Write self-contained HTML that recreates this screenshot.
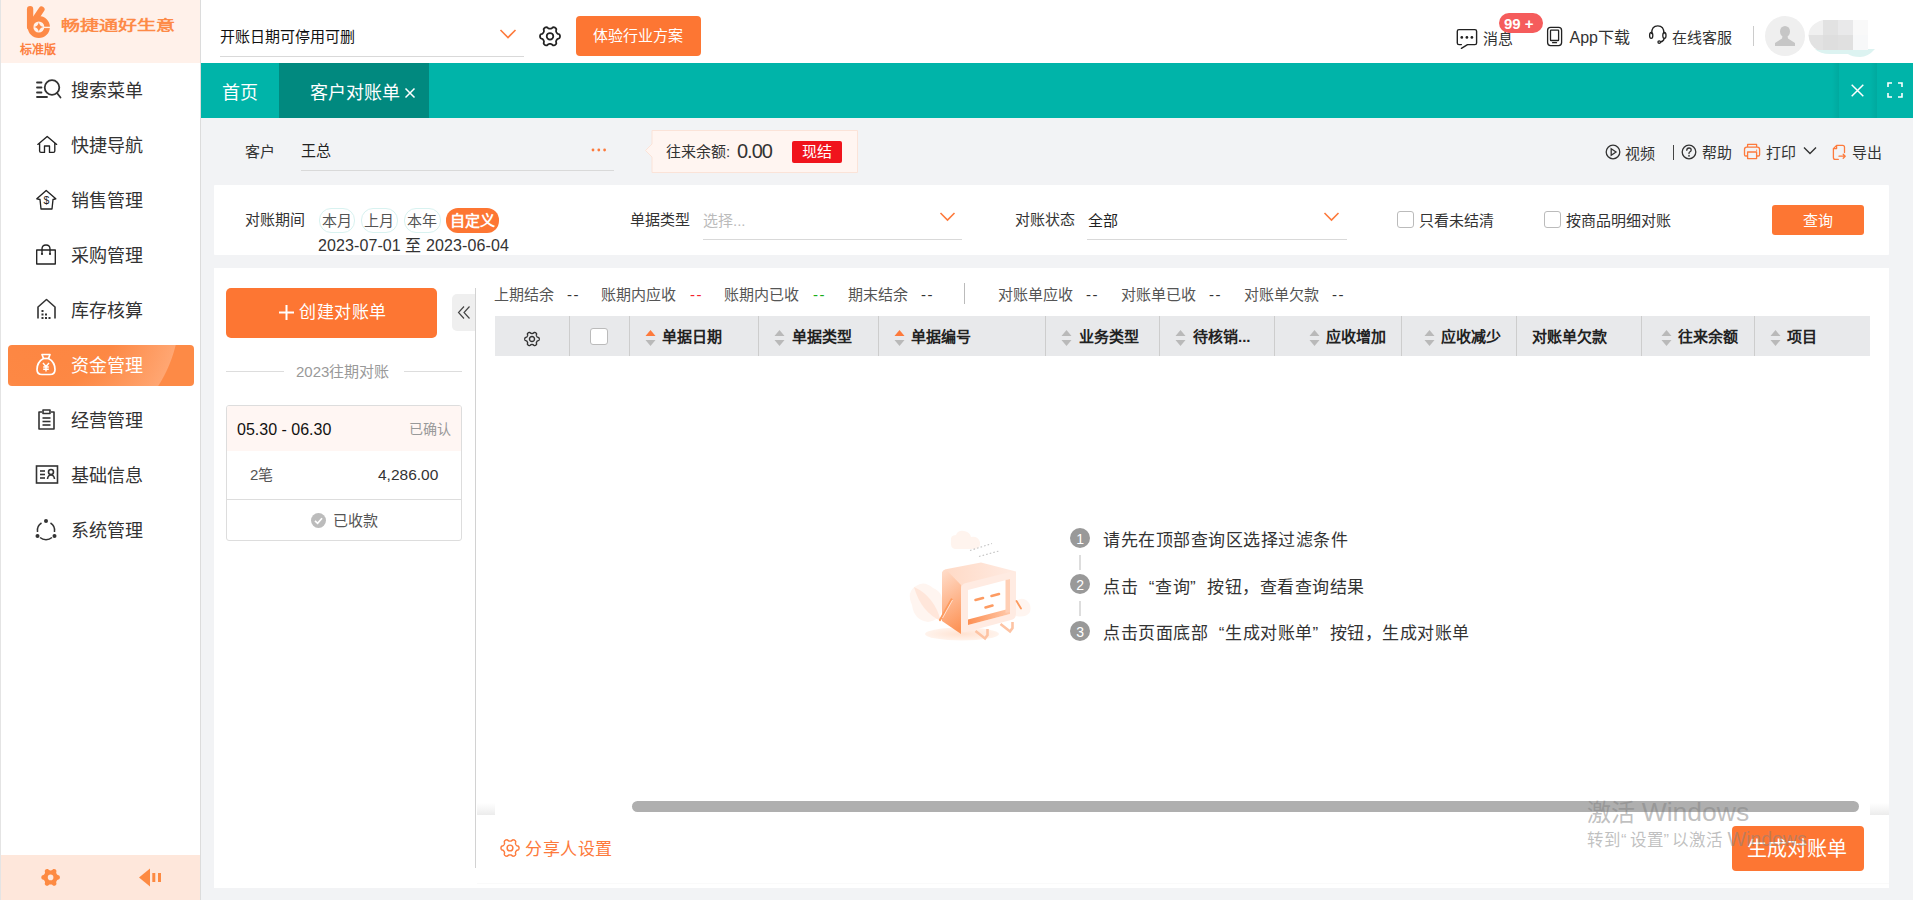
<!DOCTYPE html>
<html lang="zh-CN"><head><meta charset="utf-8">
<style>
*{box-sizing:border-box;margin:0;padding:0}
html,body{width:1913px;height:900px;overflow:hidden;background:#f2f3f5;font-family:"Liberation Sans",sans-serif;color:#333}
.a{position:absolute;white-space:nowrap}
svg{display:block}
</style></head><body>
<!-- SIDEBAR -->
<div class="a" style="left:0;top:0;width:201px;height:900px;background:#fff;border-left:1px solid #e4e4e4;border-right:1px solid #dcdcdc"></div>
<div class="a" style="left:1px;top:0;width:199px;height:63px;background:#fff1ea"></div>
<div class="a" style="left:1px;top:855px;width:199px;height:45px;background:#fee7db"></div>


<!-- logo -->
<svg class="a" style="left:15px;top:0px" width="50" height="42" viewBox="15 0 50 42">
<g fill="none" stroke="#fd8a47" stroke-linecap="round">
<line x1="30.1" y1="9.2" x2="30.1" y2="27" stroke-width="6.3"/>
<line x1="41.6" y1="9.4" x2="35.5" y2="18.5" stroke-width="6"/>
<circle cx="38.8" cy="27" r="8.3" stroke-width="5.6"/>
</g>
<line x1="44" y1="27.4" x2="50" y2="27.4" stroke="#fff1ea" stroke-width="1.4"/>
<path d="M38.8 22.2 Q39.5 26.3 43.6 27 Q39.5 27.7 38.8 31.8 Q38.1 27.7 34 27 Q38.1 26.3 38.8 22.2Z" fill="#fd8a47"/>
</svg>
<div class="a" style="left:61px;top:18.5px;font-size:16px;line-height:16px;font-weight:bold;color:#fd8a47;transform:scale(1.19,0.82);transform-origin:0 0">畅捷通好生意</div>
<div class="a" style="left:20px;top:44px;font-size:12px;line-height:13px;font-weight:bold;color:#fd8040">标准版</div>

<!-- active bg -->
<div class="a" style="left:8px;top:345px;width:186px;height:41px;border-radius:4px;background:radial-gradient(circle 136px at 36px -32px,#fd8541 0%,#fd8844 55%,#ffa672 99.3%,#fd8a46 100%)"></div>

<!-- menu text -->
<div class="a" style="left:71px;top:82px;font-size:18px;line-height:18px;color:#333">搜索菜单</div>
<div class="a" style="left:71px;top:137px;font-size:18px;line-height:18px;color:#333">快捷导航</div>
<div class="a" style="left:71px;top:192px;font-size:18px;line-height:18px;color:#333">销售管理</div>
<div class="a" style="left:71px;top:247px;font-size:18px;line-height:18px;color:#333">采购管理</div>
<div class="a" style="left:71px;top:302px;font-size:18px;line-height:18px;color:#333">库存核算</div>
<div class="a" style="left:71px;top:357px;font-size:18px;line-height:18px;color:#fff">资金管理</div>
<div class="a" style="left:71px;top:412px;font-size:18px;line-height:18px;color:#333">经营管理</div>
<div class="a" style="left:71px;top:467px;font-size:18px;line-height:18px;color:#333">基础信息</div>
<div class="a" style="left:71px;top:522px;font-size:18px;line-height:18px;color:#333">系统管理</div>

<!-- menu icons -->
<svg class="a" style="left:34px;top:78px" width="30" height="24" viewBox="0 0 30 24" fill="none" stroke="#333" stroke-width="1.8" stroke-linecap="round">
<line x1="3" y1="4.5" x2="7.5" y2="4.5"/><line x1="3" y1="9.5" x2="7.5" y2="9.5"/><line x1="3" y1="14.5" x2="7.5" y2="14.5"/><line x1="3" y1="19" x2="13" y2="19"/>
<circle cx="18" cy="9.5" r="7.3"/><line x1="23" y1="15" x2="26.5" y2="19.5"/>
</svg>
<svg class="a" style="left:35px;top:134px" width="24" height="22" viewBox="0 0 24 22" fill="none" stroke="#222" stroke-width="1.35" stroke-linejoin="round" stroke-linecap="round">
<path d="M2.8 10.4 L12.2 2.4 L21.7 10.4 M4.6 9.2 V17 Q4.6 18.4 6 18.4 H9.5 V12 H14.5 V18.4 H18.4 Q19.8 18.4 19.8 17 V9.2"/>
</svg>
<svg class="a" style="left:35px;top:188px" width="24" height="24" viewBox="0 0 24 24" fill="none" stroke="#222" stroke-width="1.35" stroke-linejoin="round">
<path d="M11.2 2.5 L20.8 10.8 L18 11.5 L17 21 H6 L5 11.5 L1.8 10.8 Z"/>
<text x="11.4" y="15.8" font-size="10.5" font-family="Liberation Sans" text-anchor="middle" fill="#222" stroke="none">$</text>
</svg>
<svg class="a" style="left:35px;top:242px" width="24" height="24" viewBox="0 0 24 24" fill="none" stroke="#222" stroke-width="1.35" stroke-linejoin="round">
<rect x="1.7" y="8" width="18.6" height="14"/><path d="M7 12 V7 Q7 3 11 3 Q15 3 15 7 V12"/>
<circle cx="7" cy="12" r="1.1" fill="#222" stroke="none"/><circle cx="15" cy="12" r="1.1" fill="#222" stroke="none"/>
</svg>
<svg class="a" style="left:35px;top:297px" width="24" height="24" viewBox="0 0 24 24" fill="none" stroke="#333" stroke-width="1.6" stroke-linejoin="round">
<path d="M3 21.5 V10 L11.5 2.5 L20 10 V21.5"/>
<g fill="#333" stroke="none"><rect x="6.5" y="13" width="2" height="2"/><rect x="6.5" y="16.5" width="2" height="2"/><rect x="6.5" y="20" width="2" height="2"/><rect x="10" y="16.5" width="2" height="2"/><rect x="10" y="20" width="2" height="2"/><rect x="13.5" y="20" width="2" height="2"/></g>
</svg>
<svg class="a" style="left:34px;top:352px" width="24" height="25" viewBox="0 0 24 25" fill="none" stroke="#fff" stroke-width="1.7" stroke-linejoin="round">
<path d="M8 2.5 H16 L14.5 6.5 Q21 10 21 17.5 Q21 22.5 16 22.5 H8 Q3 22.5 3 17.5 Q3 10 9.5 6.5 Z"/><line x1="9.5" y1="6.5" x2="14.5" y2="6.5"/>
<path d="M9 11 L12 14.5 L15 11 M12 14.5 V19.5 M9.2 15 H14.8 M9.2 17.3 H14.8" stroke-width="1.4"/>
</svg>
<svg class="a" style="left:36px;top:408px" width="22" height="24" viewBox="0 0 22 24" fill="none" stroke="#333" stroke-width="1.6" stroke-linejoin="round">
<path d="M6 4 H3 V21 H18 V4 H15 M7 2 H14 V5.5 H7 Z"/><line x1="6.5" y1="10" x2="14.5" y2="10"/><line x1="6.5" y1="13.5" x2="14.5" y2="13.5"/><line x1="6.5" y1="17" x2="14.5" y2="17"/>
</svg>
<svg class="a" style="left:34px;top:463px" width="26" height="24" viewBox="0 0 26 24" fill="none" stroke="#333" stroke-width="1.6">
<rect x="2.5" y="3" width="21" height="17"/><line x1="6" y1="8" x2="11" y2="8"/><line x1="6" y1="11.5" x2="11" y2="11.5"/><line x1="6" y1="15" x2="11" y2="15"/>
<circle cx="17" cy="9" r="2.5"/><path d="M13.5 16 Q14 12 17 12 Q20 12 20.5 16"/>
</svg>
<svg class="a" style="left:34px;top:518px" width="24" height="24" viewBox="0 0 24 24" fill="none" stroke="#333" stroke-width="1.5">
<path d="M7.5 5 A9 9 0 0 0 3.5 14"/><path d="M16.5 5 A9 9 0 0 1 20.5 14"/><path d="M6 19.5 A9 9 0 0 0 18 19.5"/>
<g fill="#333" stroke="none"><circle cx="12" cy="3" r="2"/><circle cx="3.5" cy="18" r="2"/><circle cx="20.5" cy="18" r="2"/></g>
</svg>

<!-- bottom icons -->
<svg class="a" style="left:40px;top:867px" width="22" height="22" viewBox="40 867 22 22"><path fill="#fd8a42" fill-rule="evenodd" d="M59.90 877.40 L59.86 876.91 L59.73 876.44 L59.52 875.99 L59.20 875.57 L58.47 875.29 L57.74 875.08 L57.39 874.80 L57.10 874.51 L56.86 874.21 L56.66 873.90 L56.49 873.57 L56.36 873.22 L56.25 872.83 L56.18 872.37 L56.36 871.64 L56.48 870.87 L56.28 870.38 L56.00 869.97 L55.65 869.62 L55.25 869.35 L54.81 869.14 L54.34 869.01 L53.84 868.97 L53.32 869.04 L52.71 869.53 L52.16 870.05 L51.74 870.22 L51.34 870.32 L50.97 870.38 L50.60 870.40 L50.23 870.38 L49.86 870.32 L49.46 870.22 L49.04 870.05 L48.49 869.53 L47.88 869.04 L47.36 868.97 L46.86 869.01 L46.39 869.14 L45.95 869.35 L45.55 869.62 L45.20 869.97 L44.92 870.38 L44.72 870.87 L44.84 871.64 L45.02 872.37 L44.95 872.83 L44.84 873.22 L44.71 873.57 L44.54 873.90 L44.34 874.21 L44.10 874.51 L43.81 874.80 L43.46 875.08 L42.73 875.29 L42.00 875.57 L41.68 875.99 L41.47 876.44 L41.34 876.91 L41.30 877.40 L41.34 877.89 L41.47 878.36 L41.68 878.81 L42.00 879.23 L42.73 879.51 L43.46 879.72 L43.81 880.00 L44.10 880.29 L44.34 880.59 L44.54 880.90 L44.71 881.23 L44.84 881.58 L44.95 881.97 L45.02 882.43 L44.84 883.16 L44.72 883.93 L44.92 884.42 L45.20 884.83 L45.55 885.18 L45.95 885.45 L46.39 885.66 L46.86 885.79 L47.36 885.83 L47.88 885.76 L48.49 885.27 L49.04 884.75 L49.46 884.58 L49.86 884.48 L50.23 884.42 L50.60 884.40 L50.97 884.42 L51.34 884.48 L51.74 884.58 L52.16 884.75 L52.71 885.27 L53.32 885.76 L53.84 885.83 L54.34 885.79 L54.81 885.66 L55.25 885.45 L55.65 885.18 L56.00 884.83 L56.28 884.42 L56.48 883.93 L56.36 883.16 L56.18 882.43 L56.25 881.97 L56.36 881.58 L56.49 881.23 L56.66 880.90 L56.86 880.59 L57.10 880.29 L57.39 880.00 L57.74 879.72 L58.47 879.51 L59.20 879.23 L59.52 878.81 L59.73 878.36 L59.86 877.89Z M50.6 874.6 A2.8 2.8 0 1 0 50.6 880.2 A2.8 2.8 0 1 0 50.6 874.6Z"/></svg>
<svg class="a" style="left:138px;top:868px" width="24" height="19" viewBox="0 0 24 19">
<path fill="#fd8a42" d="M1 9.5 L12 0.5 V18.5 Z"/><rect x="14.3" y="5" width="3" height="9" fill="#fd8a42"/><rect x="20" y="5" width="3" height="9" fill="#fd8a42"/>
</svg>

<!-- HEADER -->
<div class="a" style="left:201px;top:0;width:1712px;height:63px;background:#fff"></div>

<!-- TAB BAR -->
<div class="a" style="left:201px;top:63px;width:1712px;height:55px;background:#00b4a9"></div>
<div class="a" style="left:279px;top:63px;width:150px;height:55px;background:#01897f"></div>


<div class="a" style="left:220px;top:29px;font-size:15px;line-height:15px;color:#111">开账日期可停用可删</div>
<div class="a" style="left:220px;top:56px;width:304px;height:1px;background:#d9d9d9"></div>
<svg class="a" style="left:499px;top:28px" width="18" height="12" viewBox="0 0 18 12" fill="none" stroke="#fd7a3c" stroke-width="1.6"><path d="M1.5 2 L9 9.5 L16.5 2"/></svg>
<svg class="a" style="left:538px;top:25px" width="24" height="23" viewBox="-12 -11.3 24 23"><path d="M10.00 -0.00 L9.96 -0.52 L9.84 -1.03 L9.62 -1.52 L9.30 -1.98 L8.50 -2.28 L7.70 -2.50 L7.33 -2.82 L7.04 -3.14 L6.80 -3.46 L6.58 -3.80 L6.40 -4.15 L6.24 -4.53 L6.10 -4.94 L6.01 -5.41 L6.22 -6.22 L6.36 -7.07 L6.13 -7.57 L5.81 -8.00 L5.43 -8.36 L5.00 -8.66 L4.53 -8.89 L4.02 -9.04 L3.49 -9.10 L2.94 -9.04 L2.28 -8.50 L1.68 -7.92 L1.23 -7.76 L0.81 -7.67 L0.40 -7.62 L0.00 -7.60 L-0.40 -7.62 L-0.81 -7.67 L-1.23 -7.76 L-1.68 -7.92 L-2.28 -8.50 L-2.94 -9.04 L-3.49 -9.10 L-4.02 -9.04 L-4.53 -8.89 L-5.00 -8.66 L-5.43 -8.36 L-5.81 -8.00 L-6.13 -7.57 L-6.36 -7.07 L-6.22 -6.22 L-6.01 -5.41 L-6.10 -4.94 L-6.24 -4.53 L-6.40 -4.15 L-6.58 -3.80 L-6.80 -3.46 L-7.04 -3.14 L-7.33 -2.82 L-7.70 -2.50 L-8.50 -2.28 L-9.30 -1.98 L-9.62 -1.52 L-9.84 -1.03 L-9.96 -0.52 L-10.00 -0.00 L-9.96 0.52 L-9.84 1.03 L-9.62 1.52 L-9.30 1.98 L-8.50 2.28 L-7.70 2.50 L-7.33 2.82 L-7.04 3.14 L-6.80 3.46 L-6.58 3.80 L-6.40 4.15 L-6.24 4.53 L-6.10 4.94 L-6.01 5.41 L-6.22 6.22 L-6.36 7.07 L-6.13 7.57 L-5.81 8.00 L-5.43 8.36 L-5.00 8.66 L-4.53 8.89 L-4.02 9.04 L-3.49 9.10 L-2.94 9.04 L-2.28 8.50 L-1.68 7.92 L-1.23 7.76 L-0.81 7.67 L-0.40 7.62 L-0.00 7.60 L0.40 7.62 L0.81 7.67 L1.23 7.76 L1.68 7.92 L2.28 8.50 L2.94 9.04 L3.49 9.10 L4.02 9.04 L4.53 8.89 L5.00 8.66 L5.43 8.36 L5.81 8.00 L6.13 7.57 L6.36 7.07 L6.22 6.22 L6.01 5.41 L6.10 4.94 L6.24 4.53 L6.40 4.15 L6.58 3.80 L6.80 3.46 L7.04 3.14 L7.33 2.82 L7.70 2.50 L8.50 2.28 L9.30 1.98 L9.62 1.52 L9.84 1.03 L9.96 0.52Z" fill="none" stroke="#222" stroke-width="1.75" stroke-linejoin="round"/><circle cx="0" cy="0" r="3.3" fill="none" stroke="#222" stroke-width="1.75"/></svg>
<div class="a" style="left:576px;top:16px;width:125px;height:40px;background:#fd7633;border-radius:4px"></div>
<div class="a" style="left:593px;top:28px;font-size:15px;line-height:15px;color:#fff">体验行业方案</div>

<!-- right header -->
<svg class="a" style="left:1454px;top:27px" width="26" height="24" viewBox="1454 27 26 24" fill="none" stroke="#222" stroke-width="1.4" stroke-linejoin="round" stroke-linecap="round">
<path d="M1461.4 44.6 H1459 Q1457.3 44.6 1457.3 42.9 V31.3 Q1457.3 29.6 1459 29.6 H1474.9 Q1476.6 29.6 1476.6 31.3 V42.9 Q1476.6 44.6 1474.9 44.6 H1467.5 L1461.4 48.3"/>
<g fill="#222" stroke="none"><circle cx="1461.8" cy="37.4" r="1.35"/><circle cx="1466.9" cy="37.4" r="1.35"/><circle cx="1471.9" cy="37.4" r="1.35"/></g>
</svg>
<div class="a" style="left:1483px;top:31px;font-size:15px;line-height:15px;color:#333">消息</div>
<div class="a" style="left:1499px;top:13px;width:44px;height:20px;border-radius:10px;background:#f55c5c"></div>
<div class="a" style="left:1504px;top:15px;font-size:15px;line-height:17px;font-weight:bold;color:#fff">99 +</div>
<svg class="a" style="left:1545px;top:25px" width="19" height="23" viewBox="1545 25 19 23" fill="none" stroke="#222" stroke-width="1.3" stroke-linejoin="round" stroke-linecap="round">
<rect x="1547.6" y="27.4" width="14" height="18.2" rx="3"/><rect x="1550.5" y="30.2" width="8.1" height="10.3" rx="0.6"/><line x1="1552.6" y1="42.7" x2="1556.5" y2="42.7"/>
</svg>
<div class="a" style="left:1569.5px;top:30px;font-size:16px;line-height:16px;color:#333">App下载</div>
<svg class="a" style="left:1647px;top:23px" width="22" height="23" viewBox="1647 23 22 23" fill="none" stroke="#222" stroke-width="1.3" stroke-linejoin="round" stroke-linecap="round">
<path d="M1651.6 33.5 Q1651.6 25.9 1657.8 25.9 Q1664 25.9 1664 33.5"/>
<ellipse cx="1651.2" cy="35.4" rx="1.6" ry="2.9"/><ellipse cx="1664.4" cy="35.4" rx="1.6" ry="2.9"/>
<path d="M1664.2 38.4 Q1663.6 41.6 1660.6 42"/><circle cx="1659.2" cy="42.1" r="1.25"/>
</svg>
<div class="a" style="left:1672px;top:30px;font-size:15px;line-height:15px;color:#333">在线客服</div>
<div class="a" style="left:1753px;top:26px;width:1px;height:20px;background:#ccc"></div>
<div class="a" style="left:1765px;top:16px;width:40px;height:40px;border-radius:50%;background:#efefef"></div>
<svg class="a" style="left:1773px;top:24px" width="24" height="24" viewBox="0 0 24 24"><ellipse cx="12" cy="7.5" rx="5" ry="5.5" fill="#c6c6c6"/><path d="M9.5 12 H14.5 L15 14.5 L22 19 V22 H2 V19 L9 14.5 Z" fill="#c6c6c6"/></svg>
<svg class="a" style="left:1805px;top:17px" width="72" height="42" viewBox="1805 17 72 42">
<path d="M1815 49 H1875 Q1868 57 1860 57 Q1852 57 1848 54 H1830 Q1820 54 1815 49Z" fill="#dcf3f1"/>
<g>
<path d="M1823 20 V35 H1808.5 Q1809 24 1823 20Z" fill="#f0f0f0"/>
<rect x="1823" y="20" width="15" height="15" fill="#e2e2e2"/>
<rect x="1838" y="20" width="15" height="15" fill="#e9e9ea"/>
<rect x="1853" y="20" width="15" height="15" fill="#f9f9f9"/>
<path d="M1808.5 35 H1823 V50 H1818 Q1809 46 1808.5 35Z" fill="#e2e2e2"/>
<rect x="1823" y="35" width="15" height="15" fill="#dedede"/>
<rect x="1838" y="35" width="15" height="15" fill="#e0e0e0"/>
<rect x="1853" y="35" width="15" height="15" fill="#f7f8f9"/>
</g>
</svg>

<!-- tab bar content -->
<div class="a" style="left:222px;top:83.5px;font-size:18px;line-height:18px;color:#fff">首页</div>
<div class="a" style="left:310px;top:83.5px;font-size:18px;line-height:18px;color:#fff">客户对账单</div>
<svg class="a" style="left:404px;top:87px" width="12" height="12" viewBox="0 0 12 12" stroke="#fff" stroke-width="1.5"><path d="M1.5 1.5 L10.5 10.5 M10.5 1.5 L1.5 10.5"/></svg>
<div class="a" style="left:1832px;top:63px;width:7px;height:55px;background:linear-gradient(90deg,rgba(0,60,55,0),rgba(0,60,55,0.09))"></div>
<div class="a" style="left:1870px;top:63px;width:7px;height:55px;background:linear-gradient(90deg,rgba(0,60,55,0),rgba(0,60,55,0.09))"></div>
<svg class="a" style="left:1851px;top:84px" width="13" height="13" viewBox="0 0 13 13" stroke="#fff" stroke-width="1.5"><path d="M0.7 0.7 L12.3 12.3 M12.3 0.7 L0.7 12.3"/></svg>
<svg class="a" style="left:1887px;top:82px" width="16" height="16" viewBox="0 0 16 16" fill="none" stroke="#fff" stroke-width="1.6"><path d="M1 5 V1 H5 M11 1 H15 V5 M15 11 V15 H11 M5 15 H1 V11"/></svg>

<!-- FILTER CARD -->
<div class="a" style="left:214px;top:185px;width:1675px;height:70px;background:#fff;border-radius:1px"></div>


<!-- customer row -->
<div class="a" style="left:245px;top:144px;font-size:15px;line-height:15px;color:#333">客户</div>
<div class="a" style="left:301px;top:143px;font-size:15px;line-height:15px;color:#222">王总</div>
<div class="a" style="left:301px;top:170px;width:313px;height:1px;background:#d9d9d9"></div>
<svg class="a" style="left:591px;top:148px" width="16" height="4" viewBox="0 0 16 4" fill="#fd7a3c"><circle cx="2" cy="2" r="1.4"/><circle cx="7.8" cy="2" r="1.4"/><circle cx="13.6" cy="2" r="1.4"/></svg>
<svg class="a" style="left:643px;top:130px" width="216" height="44" viewBox="0 0 216 44"><path d="M9 0.5 H214.5 V42.5 H9 V27 L2.5 20.5 L9 14 Z" fill="#fff5f1" stroke="#fbe3d8" stroke-width="1"/></svg>
<div class="a" style="left:666px;top:144px;font-size:15px;line-height:15px;color:#333">往来余额:</div>
<div class="a" style="left:737px;top:141px;font-size:20px;line-height:20px;color:#333;letter-spacing:-1px">0.00</div>
<div class="a" style="left:792px;top:141px;width:50px;height:22px;background:#f0141c;border-radius:2px"></div>
<div class="a" style="left:802px;top:144px;font-size:15px;line-height:15px;color:#fff">现结</div>

<!-- toolbar right -->
<svg class="a" style="left:1605px;top:144px" width="16" height="16" viewBox="0 0 16 16" fill="none" stroke="#333" stroke-width="1.3"><circle cx="8" cy="8" r="6.8"/><path d="M6.2 4.8 L11 8 L6.2 11.2 Z"/></svg>
<div class="a" style="left:1625px;top:146px;font-size:15px;line-height:15px;color:#333">视频</div>
<div class="a" style="left:1672.5px;top:145px;width:1.3px;height:15px;background:#444"></div>
<svg class="a" style="left:1681px;top:144px" width="16" height="16" viewBox="0 0 16 16" fill="none" stroke="#333" stroke-width="1.3"><circle cx="8" cy="8" r="6.8"/><path d="M5.8 6.3 Q5.8 4 8 4 Q10.2 4 10.2 6 Q10.2 7.3 8.7 8 Q8 8.4 8 9.6" stroke-linecap="round"/><circle cx="8" cy="11.8" r="0.9" fill="#333" stroke="none"/></svg>
<div class="a" style="left:1702px;top:145px;font-size:15px;line-height:15px;color:#333">帮助</div>
<svg class="a" style="left:1743px;top:143px" width="18" height="17" viewBox="1743 143 18 17" fill="none" stroke="#fd7a3c" stroke-width="1.3" stroke-linejoin="round">
<path d="M1747.6 147.2 V144.4 H1756.6 V147.2 M1747.6 156 H1745.8 Q1744.5 156 1744.5 154.7 V149.4 Q1744.5 147.2 1746.7 147.2 H1757.4 Q1759.6 147.2 1759.6 149.4 V154.7 Q1759.6 156 1758.3 156 H1756.6"/>
<rect x="1747.6" y="152" width="9" height="6.6"/><circle cx="1756.6" cy="150.2" r="0.6" fill="#fd7a3c" stroke="none"/>
</svg>
<div class="a" style="left:1766px;top:145px;font-size:15px;line-height:15px;color:#333">打印</div>
<svg class="a" style="left:1803px;top:146px" width="14" height="9" viewBox="0 0 14 9" fill="none" stroke="#333" stroke-width="1.4"><path d="M1 1.5 L7 7.5 L13 1.5"/></svg>
<svg class="a" style="left:1831px;top:143px" width="16" height="19" viewBox="1831 143 16 19" fill="none" stroke="#fd7a3c" stroke-width="1.3" stroke-linejoin="round" stroke-linecap="round">
<path d="M1844.5 152.5 V147.3 Q1844.5 145.4 1842.6 145.4 H1836.6 L1833.4 148.6 V157.5 Q1833.4 159.4 1835.3 159.4 H1838.3 M1836.6 145.4 V148.6 H1833.4"/>
<path d="M1839 156.2 H1845.2 M1843.2 154.2 L1845.2 156.2 L1843.2 158.2"/>
</svg>
<div class="a" style="left:1852px;top:145px;font-size:15px;line-height:15px;color:#333">导出</div>

<!-- FILTER CONTENT -->
<div class="a" style="left:245px;top:212px;font-size:15px;line-height:15px;color:#333">对账期间</div>
<div class="a" style="left:319px;top:208px;width:36px;height:25px;border:1px solid #d8f2f0;border-radius:12px"></div>
<div class="a" style="left:322px;top:213px;font-size:15px;line-height:15px;color:#555">本月</div>
<div class="a" style="left:361px;top:208px;width:37px;height:25px;border:1px solid #d8f2f0;border-radius:12px"></div>
<div class="a" style="left:364px;top:213px;font-size:15px;line-height:15px;color:#555">上月</div>
<div class="a" style="left:404px;top:208px;width:37px;height:25px;border:1px solid #d8f2f0;border-radius:12px"></div>
<div class="a" style="left:407px;top:213px;font-size:15px;line-height:15px;color:#555">本年</div>
<div class="a" style="left:446px;top:208px;width:53px;height:25px;background:#fd7633;border-radius:12px"></div>
<div class="a" style="left:450px;top:213px;font-size:15px;line-height:15px;color:#fff;font-weight:bold">自定义</div>
<div class="a" style="left:318px;top:238px;font-size:16px;line-height:16px;color:#333;letter-spacing:0.1px">2023-07-01 至 2023-06-04</div>

<div class="a" style="left:630px;top:212px;font-size:15px;line-height:15px;color:#333">单据类型</div>
<div class="a" style="left:703px;top:213px;font-size:15px;line-height:15px;color:#bbb">选择...</div>
<div class="a" style="left:703px;top:239px;width:259px;height:1px;background:#d9d9d9"></div>
<svg class="a" style="left:939px;top:211px" width="17" height="12" viewBox="0 0 17 12" fill="none" stroke="#fd7a3c" stroke-width="1.6"><path d="M1.5 2 L8.5 9 L15.5 2"/></svg>

<div class="a" style="left:1015px;top:212px;font-size:15px;line-height:15px;color:#333">对账状态</div>
<div class="a" style="left:1088px;top:213px;font-size:15px;line-height:15px;color:#222">全部</div>
<div class="a" style="left:1087px;top:239px;width:260px;height:1px;background:#d9d9d9"></div>
<svg class="a" style="left:1323px;top:211px" width="17" height="12" viewBox="0 0 17 12" fill="none" stroke="#fd7a3c" stroke-width="1.6"><path d="M1.5 2 L8.5 9 L15.5 2"/></svg>

<div class="a" style="left:1397px;top:211px;width:17px;height:17px;border:1px solid #bbb;border-radius:3px;background:#fff"></div>
<div class="a" style="left:1419px;top:213px;font-size:15px;line-height:15px;color:#333">只看未结清</div>
<div class="a" style="left:1544px;top:211px;width:17px;height:17px;border:1px solid #bbb;border-radius:3px;background:#fff"></div>
<div class="a" style="left:1566px;top:213px;font-size:15px;line-height:15px;color:#333">按商品明细对账</div>
<div class="a" style="left:1772px;top:205px;width:92px;height:30px;background:#fd7633;border-radius:3px"></div>
<div class="a" style="left:1803px;top:213px;font-size:15px;line-height:15px;color:#fff">查询</div>

<!-- MAIN CARD -->
<div class="a" style="left:214px;top:268px;width:1675px;height:620px;background:#fff"></div>


<!-- left panel -->
<div class="a" style="left:226px;top:288px;width:211px;height:50px;background:#fd7633;border-radius:5px"></div>
<svg class="a" style="left:278px;top:304px" width="17" height="17" viewBox="0 0 17 17" stroke="#fff" stroke-width="2"><path d="M8.5 1 V16 M1 8.5 H16"/></svg>
<div class="a" style="left:299px;top:304px;font-size:17px;letter-spacing:0.5px;line-height:17px;color:#fff">创建对账单</div>
<div class="a" style="left:452px;top:294px;width:23px;height:37px;background:#efefef;border-radius:5px 0 0 5px"></div>
<svg class="a" style="left:456px;top:305px" width="16" height="15" viewBox="0 0 16 15" fill="none" stroke="#444" stroke-width="1.15"><path d="M8 1.5 L2.5 7.5 L8 13.5 M13.5 1.5 L8 7.5 L13.5 13.5"/></svg>
<div class="a" style="left:475px;top:288px;width:1px;height:580px;background:#d2d2d2"></div>
<div class="a" style="left:226px;top:371px;width:58px;height:1px;background:#ddd"></div>
<div class="a" style="left:404px;top:371px;width:58px;height:1px;background:#ddd"></div>
<div class="a" style="left:296px;top:364px;font-size:15px;line-height:15px;color:#999">2023往期对账</div>

<div class="a" style="left:226px;top:405px;width:236px;height:136px;border:1px solid #ddd;border-radius:3px;overflow:hidden">
<div class="a" style="left:0;top:0;width:234px;height:45px;background:#fff6f3"></div>
<div class="a" style="left:0;top:93px;width:234px;height:1px;background:#ddd"></div>
</div>
<div class="a" style="left:237px;top:421.5px;font-size:16px;line-height:16px;color:#111">05.30 - 06.30</div>
<div class="a" style="left:408.5px;top:422px;font-size:14px;line-height:14px;color:#999">已确认</div>
<div class="a" style="left:250px;top:467px;font-size:15px;line-height:15px;color:#555">2笔</div>
<div class="a" style="left:378px;top:467px;font-size:15.5px;line-height:15px;color:#333">4,286.00</div>
<svg class="a" style="left:310px;top:512px" width="17" height="17" viewBox="0 0 17 17"><circle cx="8.5" cy="8.5" r="7.5" fill="#bcbcbc"/><path d="M5 8.8 L7.6 11.3 L12 6.3" fill="none" stroke="#fff" stroke-width="1.7"/></svg>
<div class="a" style="left:333px;top:513px;font-size:15px;line-height:15px;color:#555">已收款</div>

<!-- stats row -->
<div class="a" style="left:494px;top:287px;font-size:15px;line-height:15px;color:#555">上期结余</div>
<div class="a" style="left:567px;top:287px;font-size:15px;line-height:15px;color:#333;letter-spacing:1.5px">--</div>
<div class="a" style="left:601px;top:287px;font-size:15px;line-height:15px;color:#555">账期内应收</div>
<div class="a" style="left:690px;top:287px;font-size:15px;line-height:15px;color:#f5222d;letter-spacing:1.5px">--</div>
<div class="a" style="left:724px;top:287px;font-size:15px;line-height:15px;color:#555">账期内已收</div>
<div class="a" style="left:813px;top:287px;font-size:15px;line-height:15px;color:#1aad19;letter-spacing:1.5px">--</div>
<div class="a" style="left:848px;top:287px;font-size:15px;line-height:15px;color:#555">期末结余</div>
<div class="a" style="left:921px;top:287px;font-size:15px;line-height:15px;color:#333;letter-spacing:1.5px">--</div>
<div class="a" style="left:964px;top:283px;width:1px;height:21px;background:#bbb"></div>
<div class="a" style="left:998px;top:287px;font-size:15px;line-height:15px;color:#555">对账单应收</div>
<div class="a" style="left:1086px;top:287px;font-size:15px;line-height:15px;color:#333;letter-spacing:1.5px">--</div>
<div class="a" style="left:1121px;top:287px;font-size:15px;line-height:15px;color:#555">对账单已收</div>
<div class="a" style="left:1209px;top:287px;font-size:15px;line-height:15px;color:#333;letter-spacing:1.5px">--</div>
<div class="a" style="left:1244px;top:287px;font-size:15px;line-height:15px;color:#555">对账单欠款</div>
<div class="a" style="left:1332px;top:287px;font-size:15px;line-height:15px;color:#333;letter-spacing:1.5px">--</div>

<!-- table header -->
<div class="a" style="left:495px;top:316px;width:1375px;height:40px;background:#e8e9eb"></div>
<div class="a" style="left:569px;top:316px;width:1px;height:40px;background:#cdcdcd"></div>
<div class="a" style="left:629px;top:316px;width:1px;height:40px;background:#cdcdcd"></div>
<div class="a" style="left:758px;top:316px;width:1px;height:40px;background:#cdcdcd"></div>
<div class="a" style="left:878px;top:316px;width:1px;height:40px;background:#cdcdcd"></div>
<div class="a" style="left:1045px;top:316px;width:1px;height:40px;background:#cdcdcd"></div>
<div class="a" style="left:1159px;top:316px;width:1px;height:40px;background:#cdcdcd"></div>
<div class="a" style="left:1274px;top:316px;width:1px;height:40px;background:#cdcdcd"></div>
<div class="a" style="left:1401px;top:316px;width:1px;height:40px;background:#cdcdcd"></div>
<div class="a" style="left:1516px;top:316px;width:1px;height:40px;background:#cdcdcd"></div>
<div class="a" style="left:1641px;top:316px;width:1px;height:40px;background:#cdcdcd"></div>
<div class="a" style="left:1754px;top:316px;width:1px;height:40px;background:#cdcdcd"></div>
<svg class="a" style="left:522px;top:328.5px" width="20" height="20" viewBox="-13.8 -13.8 27.6 27.6"><path d="M10.00 -0.00 L9.96 -0.52 L9.84 -1.03 L9.62 -1.52 L9.30 -1.98 L8.50 -2.28 L7.70 -2.50 L7.33 -2.82 L7.04 -3.14 L6.80 -3.46 L6.58 -3.80 L6.40 -4.15 L6.24 -4.53 L6.10 -4.94 L6.01 -5.41 L6.22 -6.22 L6.36 -7.07 L6.13 -7.57 L5.81 -8.00 L5.43 -8.36 L5.00 -8.66 L4.53 -8.89 L4.02 -9.04 L3.49 -9.10 L2.94 -9.04 L2.28 -8.50 L1.68 -7.92 L1.23 -7.76 L0.81 -7.67 L0.40 -7.62 L0.00 -7.60 L-0.40 -7.62 L-0.81 -7.67 L-1.23 -7.76 L-1.68 -7.92 L-2.28 -8.50 L-2.94 -9.04 L-3.49 -9.10 L-4.02 -9.04 L-4.53 -8.89 L-5.00 -8.66 L-5.43 -8.36 L-5.81 -8.00 L-6.13 -7.57 L-6.36 -7.07 L-6.22 -6.22 L-6.01 -5.41 L-6.10 -4.94 L-6.24 -4.53 L-6.40 -4.15 L-6.58 -3.80 L-6.80 -3.46 L-7.04 -3.14 L-7.33 -2.82 L-7.70 -2.50 L-8.50 -2.28 L-9.30 -1.98 L-9.62 -1.52 L-9.84 -1.03 L-9.96 -0.52 L-10.00 -0.00 L-9.96 0.52 L-9.84 1.03 L-9.62 1.52 L-9.30 1.98 L-8.50 2.28 L-7.70 2.50 L-7.33 2.82 L-7.04 3.14 L-6.80 3.46 L-6.58 3.80 L-6.40 4.15 L-6.24 4.53 L-6.10 4.94 L-6.01 5.41 L-6.22 6.22 L-6.36 7.07 L-6.13 7.57 L-5.81 8.00 L-5.43 8.36 L-5.00 8.66 L-4.53 8.89 L-4.02 9.04 L-3.49 9.10 L-2.94 9.04 L-2.28 8.50 L-1.68 7.92 L-1.23 7.76 L-0.81 7.67 L-0.40 7.62 L-0.00 7.60 L0.40 7.62 L0.81 7.67 L1.23 7.76 L1.68 7.92 L2.28 8.50 L2.94 9.04 L3.49 9.10 L4.02 9.04 L4.53 8.89 L5.00 8.66 L5.43 8.36 L5.81 8.00 L6.13 7.57 L6.36 7.07 L6.22 6.22 L6.01 5.41 L6.10 4.94 L6.24 4.53 L6.40 4.15 L6.58 3.80 L6.80 3.46 L7.04 3.14 L7.33 2.82 L7.70 2.50 L8.50 2.28 L9.30 1.98 L9.62 1.52 L9.84 1.03 L9.96 0.52Z" fill="none" stroke="#333" stroke-width="1.9" stroke-linejoin="round"/><circle cx="0" cy="0" r="3.5" fill="none" stroke="#333" stroke-width="1.9"/></svg>
<div class="a" style="left:590px;top:328px;width:18px;height:17px;border:1px solid #bbb;border-radius:3px;background:#fff"></div>
<svg class="a" style="left:645px;top:329px" width="11" height="18" viewBox="0 0 11 18"><path d="M5.5 1 L10.5 7 H0.5 Z" fill="#fd7a3c"/><path d="M0.5 11 H10.5 L5.5 17 Z" fill="#b9b9b9"/></svg>
<div class="a" style="left:662px;top:329px;font-size:15px;line-height:15px;font-weight:bold;color:#222">单据日期</div>
<svg class="a" style="left:774px;top:329px" width="11" height="18" viewBox="0 0 11 18"><path d="M5.5 1 L10.5 7 H0.5 Z" fill="#b9b9b9"/><path d="M0.5 11 H10.5 L5.5 17 Z" fill="#b9b9b9"/></svg>
<div class="a" style="left:792px;top:329px;font-size:15px;line-height:15px;font-weight:bold;color:#222">单据类型</div>
<svg class="a" style="left:894px;top:329px" width="11" height="18" viewBox="0 0 11 18"><path d="M5.5 1 L10.5 7 H0.5 Z" fill="#fd7a3c"/><path d="M0.5 11 H10.5 L5.5 17 Z" fill="#b9b9b9"/></svg>
<div class="a" style="left:911px;top:329px;font-size:15px;line-height:15px;font-weight:bold;color:#222">单据编号</div>
<svg class="a" style="left:1061px;top:329px" width="11" height="18" viewBox="0 0 11 18"><path d="M5.5 1 L10.5 7 H0.5 Z" fill="#b9b9b9"/><path d="M0.5 11 H10.5 L5.5 17 Z" fill="#b9b9b9"/></svg>
<div class="a" style="left:1079px;top:329px;font-size:15px;line-height:15px;font-weight:bold;color:#222">业务类型</div>
<svg class="a" style="left:1175px;top:329px" width="11" height="18" viewBox="0 0 11 18"><path d="M5.5 1 L10.5 7 H0.5 Z" fill="#b9b9b9"/><path d="M0.5 11 H10.5 L5.5 17 Z" fill="#b9b9b9"/></svg>
<div class="a" style="left:1193px;top:329px;font-size:15px;line-height:15px;font-weight:bold;color:#222">待核销...</div>
<svg class="a" style="left:1309px;top:329px" width="11" height="18" viewBox="0 0 11 18"><path d="M5.5 1 L10.5 7 H0.5 Z" fill="#b9b9b9"/><path d="M0.5 11 H10.5 L5.5 17 Z" fill="#b9b9b9"/></svg>
<div class="a" style="left:1326px;top:329px;font-size:15px;line-height:15px;font-weight:bold;color:#222">应收增加</div>
<svg class="a" style="left:1424px;top:329px" width="11" height="18" viewBox="0 0 11 18"><path d="M5.5 1 L10.5 7 H0.5 Z" fill="#b9b9b9"/><path d="M0.5 11 H10.5 L5.5 17 Z" fill="#b9b9b9"/></svg>
<div class="a" style="left:1441px;top:329px;font-size:15px;line-height:15px;font-weight:bold;color:#222">应收减少</div>
<div class="a" style="left:1532px;top:329px;font-size:15px;line-height:15px;font-weight:bold;color:#222">对账单欠款</div>
<svg class="a" style="left:1661px;top:329px" width="11" height="18" viewBox="0 0 11 18"><path d="M5.5 1 L10.5 7 H0.5 Z" fill="#b9b9b9"/><path d="M0.5 11 H10.5 L5.5 17 Z" fill="#b9b9b9"/></svg>
<div class="a" style="left:1678px;top:329px;font-size:15px;line-height:15px;font-weight:bold;color:#222">往来余额</div>
<svg class="a" style="left:1770px;top:329px" width="11" height="18" viewBox="0 0 11 18"><path d="M5.5 1 L10.5 7 H0.5 Z" fill="#b9b9b9"/><path d="M0.5 11 H10.5 L5.5 17 Z" fill="#b9b9b9"/></svg>
<div class="a" style="left:1787px;top:329px;font-size:15px;line-height:15px;font-weight:bold;color:#222">项目</div>

<!-- empty state -->
<svg class="a" style="left:900px;top:520px" width="140" height="130" viewBox="900 520 140 130">
<defs>
<linearGradient id="gL" x1="0.3" y1="0" x2="0.5" y2="1"><stop offset="0" stop-color="#ffdac6"/><stop offset="1" stop-color="#fd9458"/></linearGradient>
<linearGradient id="gT" x1="0" y1="0" x2="1" y2="0"><stop offset="0" stop-color="#ffd9c5"/><stop offset="1" stop-color="#ffebe2"/></linearGradient>
<radialGradient id="gS" cx="0.5" cy="0.5" r="0.5"><stop offset="0" stop-color="#ffe2d1"/><stop offset="1" stop-color="#fff3ec"/></radialGradient>
<linearGradient id="gB" x1="0" y1="0" x2="1" y2="0"><stop offset="0" stop-color="#fd8f52"/><stop offset="1" stop-color="#ffc9aa"/></linearGradient>
</defs>
<ellipse cx="962" cy="634" rx="37" ry="6.5" fill="url(#gS)"/>
<path d="M912 605 Q906 592 916 586 Q924 580 933 588 Q944 592 942 606 Q942 620 928 622 Q914 620 912 605Z" fill="#fff5f0"/>
<path d="M914 587 Q934 596 941 621 Q921 612 914 587Z" fill="#ffe6da"/>
<path d="M1014 606 Q1018 596 1026 600 Q1032 604 1030 612 Q1026 618 1016 616Z" fill="#fff5f0"/>
<path d="M951 541 Q950 535 956 535 Q958 530 964 531 Q970 532 971 537 Q978 536 980 542 Q981 549 974 549 H955 Q950 548 951 541Z" fill="#fff4ee"/>
<g stroke="#c4c4c4" stroke-width="1.1" stroke-dasharray="1.6 2.1"><line x1="970" y1="550.5" x2="992" y2="543.5"/><line x1="979" y1="556.5" x2="999" y2="551"/></g>
<path d="M942 574 Q942 570 947 569 L981 562.5 L1016 571.5 V578 L961 590 Z" fill="url(#gT)"/>
<path d="M942 574 Q942 570 946 569.5 L961 585 V634 L942 621 Z" fill="url(#gL)"/>
<path d="M961 589 Q961 584 966 583 L1010 572 Q1016 571 1016 576 V614 Q1016 619 1011 620 L966 632 Q961 633 961 628 Z" fill="#ffebe2"/>
<path d="M968 590 L1010 579 V614 L968 625 Z" fill="#fff"/>
<path d="M968 619.5 L1010 608.5 V614 L968 625 Z" fill="url(#gB)"/>
<path d="M1005.5 580 L1010 579 V612 L1005.5 613 Z" fill="#ffcfb5"/>
<g stroke="#fd9b62" stroke-width="2.6" stroke-linecap="round"><line x1="975.5" y1="600" x2="983" y2="598"/><line x1="991.5" y1="596" x2="999" y2="594"/><line x1="985.5" y1="607.5" x2="992.5" y2="605.5"/></g>
<path d="M951.5 599.5 L940 620" stroke="#fd9a5e" stroke-width="2.2" stroke-linecap="round"/><path d="M952.5 600 L942.5 618" stroke="#ffe8dc" stroke-width="0.9"/>
<path d="M1016.5 601 L1021 608.5" stroke="#fd9a5e" stroke-width="1.8" stroke-linecap="round"/>
<path d="M975.5 631 L985 638.5 L987.5 635 V629" fill="none" stroke="#fdc3a3" stroke-width="2.6"/>
<path d="M1000.5 624 L1010 631.5 L1012.5 628 V622" fill="none" stroke="#fdc3a3" stroke-width="2.6"/>
</svg>

<svg class="a" style="left:1069px;top:528px" width="22" height="114" viewBox="0 0 22 114">
<g fill="#999"><circle cx="11" cy="10" r="10"/><circle cx="11" cy="56" r="10"/><circle cx="11" cy="103" r="10"/></g>
<g stroke="#ddd" stroke-width="2"><line x1="11" y1="27" x2="11" y2="42"/><line x1="11" y1="73" x2="11" y2="88"/></g>
</svg>
<div class="a" style="left:1076.3px;top:532px;font-size:14px;line-height:14px;color:#fff">1</div>
<div class="a" style="left:1076.3px;top:578px;font-size:14px;line-height:14px;color:#fff">2</div>
<div class="a" style="left:1076.3px;top:625px;font-size:14px;line-height:14px;color:#fff">3</div>
<div class="a" style="left:1103px;top:532px;font-size:17px;letter-spacing:0.5px;line-height:18px;color:#333">请先在顶部查询区选择过滤条件</div>
<div class="a" style="left:1103px;top:578.5px;font-size:17px;letter-spacing:0.5px;line-height:18px;color:#333">点击<span style="display:inline-block;width:1em;text-align:right">“</span>查询<span style="display:inline-block;width:1em;text-align:left">”</span>按钮，查看查询结果</div>
<div class="a" style="left:1103px;top:625px;font-size:17px;letter-spacing:0.5px;line-height:18px;color:#333">点击页面底部<span style="display:inline-block;width:1em;text-align:right">“</span>生成对账单<span style="display:inline-block;width:1em;text-align:left">”</span>按钮，生成对账单</div>

<!-- scrollbar -->
<div class="a" style="left:477px;top:803px;width:18px;height:12px;background:linear-gradient(180deg,#fff,#ececec)"></div>
<div class="a" style="left:1870px;top:803px;width:19px;height:12px;background:linear-gradient(180deg,#fff,#ececec)"></div>
<div class="a" style="left:632px;top:801px;width:1227px;height:11px;background:#afafaf;border-radius:6px"></div>

<!-- footer -->
<svg class="a" style="left:499.5px;top:838px" width="20" height="20" viewBox="-11.1 -11.1 22.2 22.2"><path d="M10.00 -0.00 L9.96 -0.52 L9.84 -1.03 L9.62 -1.52 L9.30 -1.98 L8.50 -2.28 L7.70 -2.50 L7.33 -2.82 L7.04 -3.14 L6.80 -3.46 L6.58 -3.80 L6.40 -4.15 L6.24 -4.53 L6.10 -4.94 L6.01 -5.41 L6.22 -6.22 L6.36 -7.07 L6.13 -7.57 L5.81 -8.00 L5.43 -8.36 L5.00 -8.66 L4.53 -8.89 L4.02 -9.04 L3.49 -9.10 L2.94 -9.04 L2.28 -8.50 L1.68 -7.92 L1.23 -7.76 L0.81 -7.67 L0.40 -7.62 L0.00 -7.60 L-0.40 -7.62 L-0.81 -7.67 L-1.23 -7.76 L-1.68 -7.92 L-2.28 -8.50 L-2.94 -9.04 L-3.49 -9.10 L-4.02 -9.04 L-4.53 -8.89 L-5.00 -8.66 L-5.43 -8.36 L-5.81 -8.00 L-6.13 -7.57 L-6.36 -7.07 L-6.22 -6.22 L-6.01 -5.41 L-6.10 -4.94 L-6.24 -4.53 L-6.40 -4.15 L-6.58 -3.80 L-6.80 -3.46 L-7.04 -3.14 L-7.33 -2.82 L-7.70 -2.50 L-8.50 -2.28 L-9.30 -1.98 L-9.62 -1.52 L-9.84 -1.03 L-9.96 -0.52 L-10.00 -0.00 L-9.96 0.52 L-9.84 1.03 L-9.62 1.52 L-9.30 1.98 L-8.50 2.28 L-7.70 2.50 L-7.33 2.82 L-7.04 3.14 L-6.80 3.46 L-6.58 3.80 L-6.40 4.15 L-6.24 4.53 L-6.10 4.94 L-6.01 5.41 L-6.22 6.22 L-6.36 7.07 L-6.13 7.57 L-5.81 8.00 L-5.43 8.36 L-5.00 8.66 L-4.53 8.89 L-4.02 9.04 L-3.49 9.10 L-2.94 9.04 L-2.28 8.50 L-1.68 7.92 L-1.23 7.76 L-0.81 7.67 L-0.40 7.62 L-0.00 7.60 L0.40 7.62 L0.81 7.67 L1.23 7.76 L1.68 7.92 L2.28 8.50 L2.94 9.04 L3.49 9.10 L4.02 9.04 L4.53 8.89 L5.00 8.66 L5.43 8.36 L5.81 8.00 L6.13 7.57 L6.36 7.07 L6.22 6.22 L6.01 5.41 L6.10 4.94 L6.24 4.53 L6.40 4.15 L6.58 3.80 L6.80 3.46 L7.04 3.14 L7.33 2.82 L7.70 2.50 L8.50 2.28 L9.30 1.98 L9.62 1.52 L9.84 1.03 L9.96 0.52Z" fill="none" stroke="#fd7a3c" stroke-width="1.6" stroke-linejoin="round"/><circle cx="0" cy="0" r="3.2" fill="none" stroke="#fd7a3c" stroke-width="1.6"/></svg>
<div class="a" style="left:525px;top:840.5px;font-size:17px;letter-spacing:0.5px;line-height:17px;color:#fd7a3c">分享人设置</div>
<div class="a" style="left:477px;top:883px;width:1412px;height:1px;background:#fafafa"></div>
<div class="a" style="left:1732px;top:826px;width:132px;height:45px;background:#fd7633;border-radius:4px"></div>
<div class="a" style="left:1747px;top:839px;font-size:20px;line-height:20px;color:#fff">生成对账单</div>
<div class="a" style="left:1587px;top:799px;font-size:24px;line-height:26px;color:rgba(130,130,130,0.5)">激活 <span style="font-size:26.5px">Windows</span></div>
<div class="a" style="left:1587px;top:830px;font-size:16.5px;line-height:18px;color:rgba(130,130,130,0.5)">转到<span style="font-family:'Liberation Sans';letter-spacing:3px">“</span>设置<span style="font-family:'Liberation Sans';letter-spacing:3px">”</span>以激活 <span style="font-size:19.5px">Windows</span></div>

</body></html>
